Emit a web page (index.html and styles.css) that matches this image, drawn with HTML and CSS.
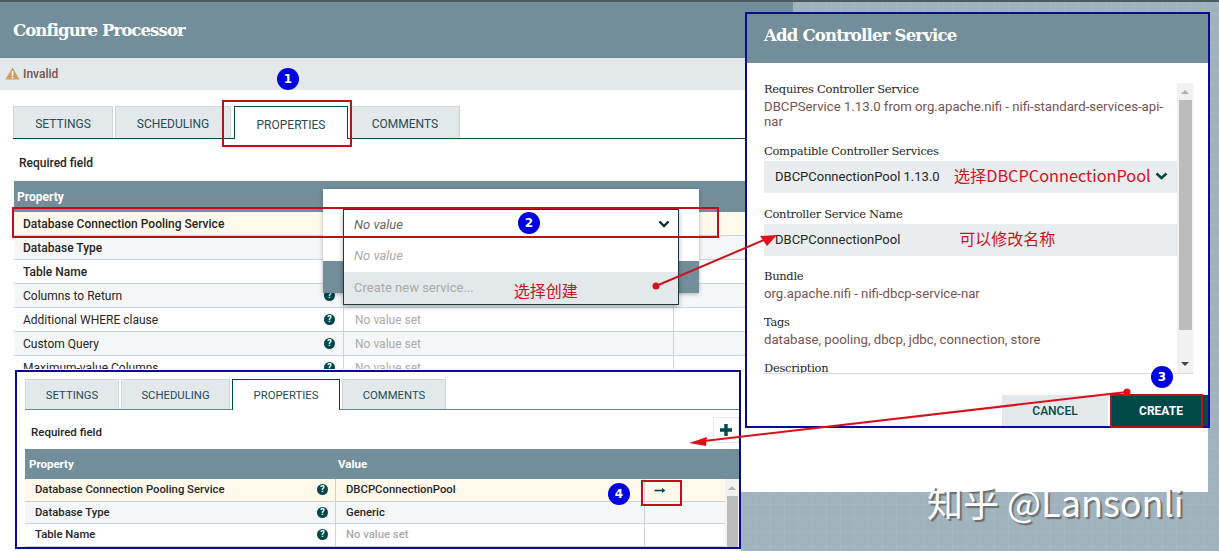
FILE: index.html
```html
<!DOCTYPE html>
<html lang="zh">
<head>
    <meta charset="UTF-8">
    <title>Configure Processor</title>
    <link rel="stylesheet" href="styles.css">
</head>
<body>
<div class="desktop">
    <div class="top-strip"></div>

    <!-- Configure Processor -->
    <section class="config-window">
        <header class="title-bar">Configure Processor</header>
        <div class="status-bar">
            <svg class="warn-icon" width="15" height="13" viewBox="0 0 15 13"><path d="M7.5 0.5 L14.6 12.6 H0.4 Z" fill="#cf9f5d"/><rect x="6.7" y="4" width="1.6" height="5" fill="#fff"/><rect x="6.7" y="9.8" width="1.6" height="1.6" fill="#fff"/></svg>
            <span>Invalid</span>
        </div>
        <nav class="tabs tabs-main">
            <div class="tab">SETTINGS</div>
            <div class="tab">SCHEDULING</div>
            <div class="tab active">PROPERTIES</div>
            <div class="tab">COMMENTS</div>
        </nav>
        <div class="required">Required field</div>
        <div class="prop-table">
            <div class="prop-head">Property</div>
            <div class="prop-row yellow strong"><span class="name">Database Connection Pooling Service</span><i class="help">?</i><span class="val"></span><span></span></div>
            <div class="prop-row grey strong"><span class="name">Database Type</span><i class="help">?</i><span class="val"></span><span></span></div>
            <div class="prop-row strong"><span class="name">Table Name</span><i class="help">?</i><span class="val"></span><span></span></div>
            <div class="prop-row grey"><span class="name">Columns to Return</span><i class="help">?</i><span class="val"></span><span></span></div>
            <div class="prop-row"><span class="name">Additional WHERE clause</span><i class="help">?</i><span class="val unset">No value set</span><span></span></div>
            <div class="prop-row grey"><span class="name">Custom Query</span><i class="help">?</i><span class="val unset">No value set</span><span></span></div>
            <div class="prop-row"><span class="name">Maximum-value Columns</span><i class="help">?</i><span class="val unset">No value set</span><span></span></div>
        </div>
    </section>
    <div class="config-foot"></div>
    <div class="add-foot"></div>

    <!-- Value dropdown -->
    <div class="value-popup">
        <div class="popup-foot"></div>
        <div class="combo">
            <div class="combo-row head">
                <span>No value</span>
                <svg class="chevron" width="12" height="8" viewBox="0 0 12 8"><path d="M1.5 1.5 L6 6 L10.5 1.5" fill="none" stroke="#1c2b2e" stroke-width="2.4"/></svg>
            </div>
            <div class="combo-row option">No value</div>
            <div class="combo-row create"><span>Create new service...</span><span class="note note-create">选择创建</span></div>
        </div>
    </div>

    <!-- Result after creating -->
    <section class="result-pane">
        <nav class="tabs tabs-small">
            <div class="tab">SETTINGS</div>
            <div class="tab">SCHEDULING</div>
            <div class="tab active">PROPERTIES</div>
            <div class="tab">COMMENTS</div>
        </nav>
        <div class="result-tools">
            <span class="required-small">Required field</span>
            <span class="add-btn">
                <svg width="14" height="14" viewBox="0 0 14 14"><path d="M7 1 V13 M1 7 H13" stroke="#004849" stroke-width="3.4"/></svg>
            </span>
        </div>
        <div class="result-table">
            <div class="result-head"><span>Property</span><span>Value</span></div>
            <div class="result-rows">
                <div class="result-row yellow"><span class="name">Database Connection Pooling Service</span><i class="help">?</i><span class="val">DBCPConnectionPool</span><span class="go">
                    <svg width="12" height="7" viewBox="0 0 12 7"><path d="M0.5 3.5 H9" stroke="#004849" stroke-width="1.6"/><path d="M8 1 L11.5 3.5 L8 6 Z" fill="#004849"/></svg>
                </span></div>
                <div class="result-row grey"><span class="name">Database Type</span><i class="help">?</i><span class="val">Generic</span><span class="go"></span></div>
                <div class="result-row"><span class="name">Table Name</span><i class="help">?</i><span class="val unset">No value set</span><span class="go"></span></div>
                <div class="scrollbar result-scroll"><b class="up"></b><div class="thumb"></div></div>
            </div>
        </div>
    </section>

    <!-- Add Controller Service -->
    <section class="add-window">
        <header class="add-title">Add Controller Service</header>
        <div class="add-body">
            <div class="add-form">
                <div class="label">Requires Controller Service</div>
                <div class="info info-low">DBCPService 1.13.0 from org.apache.nifi - nifi-standard-services-api-nar</div>
                <div class="label gap-a">Compatible Controller Services</div>
                <div class="field">
                    <span>DBCPConnectionPool 1.13.0</span>
                    <span class="note note-big">选择DBCPConnectionPool</span>
                    <svg class="chevron field-chevron" width="13" height="8" viewBox="0 0 13 8"><path d="M1.5 1.5 L6.5 6 L11.5 1.5" fill="none" stroke="#004849" stroke-width="2.5"/></svg>
                </div>
                <div class="label gap-b">Controller Service Name</div>
                <div class="field">
                    <span>DBCPConnectionPool</span>
                    <span class="note note-name">可以修改名称</span>
                </div>
                <div class="label gap-c">Bundle</div>
                <div class="info info-low">org.apache.nifi - nifi-dbcp-service-nar</div>
                <div class="label gap-d">Tags</div>
                <div class="info info-low">database, pooling, dbcp, jdbc, connection, store</div>
                <div class="label gap-d">Description</div>
            </div>
            <div class="scrollbar add-scroll"><b class="up"></b><div class="thumb"></div><b class="down"></b></div>
        </div>
        <div class="add-actions">
            <div class="btn cancel">CANCEL</div>
            <div class="btn create">CREATE</div>
        </div>
    </section>

    <div class="watermark">知乎 @Lansonli</div>

    <!-- Annotations -->
    <div class="mark mark-tab"></div>
    <div class="mark mark-row"></div>
    <div class="mark mark-create"></div>
    <div class="mark mark-go"></div>

    <svg class="arrows" width="1219" height="551" viewBox="0 0 1219 551">
        <circle cx="656" cy="286" r="3.5" fill="#e00f1c"/>
        <path d="M656 286 L764 240" stroke="#c8141f" stroke-width="2"/>
        <path d="M777 235 L760 236 L767 246 Z" fill="#e00f1c"/>
        <circle cx="1127" cy="392" r="3.5" fill="#e00f1c"/>
        <path d="M1127 392 L704 441" stroke="#d8101c" stroke-width="2"/>
        <path d="M689 443 L707 437 L706 446 Z" fill="#e00f1c"/>
    </svg>

    <span class="badge badge-1">1</span>
    <span class="badge badge-2">2</span>
    <span class="badge badge-3">3</span>
    <span class="badge badge-4">4</span>
</div>
</body>
</html>
```

FILE: styles.css
```css
* {
    margin: 0;
    padding: 0;
    box-sizing: border-box;
}

body {
    font-family: 'Roboto', sans-serif;
    font-size: 12px;
    color: #262626;
    background: #a2b3c0;
    overflow: hidden;
}

.desktop {
    position: relative;
    width: 1219px;
    height: 551px;
    overflow: hidden;
    background-color: #a0b2be;
    background-image:
        linear-gradient(rgba(255, 255, 255, 0.06) 1px, transparent 1px),
        linear-gradient(90deg, rgba(255, 255, 255, 0.06) 1px, transparent 1px);
    background-size: 14px 14px;
}

.top-strip {
    height: 2px;
    background: #4c5b60;
}

/* Окно Configure Processor */
.config-window {
    position: absolute;
    left: 0;
    top: 2px;
    width: 793px;
    height: 490px;
    background: #fff;
}

.config-foot {
    position: absolute;
    left: 0;
    top: 492px;
    width: 741px;
    height: 59px;
    background: #fff;
}

.add-foot {
    position: absolute;
    left: 793px;
    top: 428px;
    width: 415px;
    height: 64px;
    background: #fff;
}

.title-bar {
    height: 56px;
    padding: 19px 0 0 13px;
    background: #728e9b;
    color: #fff;
    font-family: 'DejaVu Serif', serif;
    font-weight: bold;
    font-size: 16.5px;
    letter-spacing: -0.9px;
}

.status-bar {
    display: flex;
    align-items: center;
    gap: 3px;
    width: 745px;
    height: 32px;
    padding: 0 0 1px 5px;
    background: #e3e8eb;
    color: #775351;
    font-size: 12px;
    font-weight: 500;
}

/* Вкладки */
.tabs {
    display: grid;
    border-bottom: 1px solid #004849;
}

.tab {
    display: flex;
    align-items: center;
    justify-content: center;
    padding-top: 3px;
    background: #e3e8eb;
    border: 1px solid #cfd6da;
    border-bottom: none;
    color: #264c58;
}

.tab.active {
    background: #fff;
    border: 1px solid #004849;
    border-bottom: none;
    margin-bottom: -1px;
    z-index: 1;
}

.tabs-main {
    grid-template-columns: 100px 116px 115px 110px;
    column-gap: 2px;
    width: 732px;
    height: 33px;
    margin: 16px 0 0 13px;
}

.tabs-main .tab.active {
    margin-left: 1px;
}

.required {
    margin: 17px 0 0 19px;
    height: 15px;
    font-weight: 500;
}

/* Таблица свойств */
.prop-table {
    width: 731px;
    height: 188px;
    margin: 10px 0 0 14px;
    overflow: hidden;
}

.prop-head {
    height: 31px;
    padding: 9px 0 0 3px;
    background: #728e9b;
    color: #fff;
    font-weight: bold;
}

.prop-row {
    display: grid;
    grid-template-columns: 329px 331px 1fr;
    position: relative;
    height: 24px;
    line-height: 25px;
    border-bottom: 1px solid #ccd3d7;
    background: #fff;
}

.prop-row.yellow,
.result-row.yellow {
    background: #fff9eb;
}

.prop-row.grey,
.result-row.grey {
    background: #f4f6f7;
}

.prop-row.strong .name {
    font-weight: 500;
}

.prop-row .name {
    padding-left: 9px;
}

.prop-row .val {
    padding-left: 11px;
    border-left: 1px solid #ccd3d7;
    border-right: 1px solid #ccd3d7;
}

.unset {
    color: #aaa;
}

.help {
    position: absolute;
    width: 11px;
    height: 11px;
    border-radius: 50%;
    background: #004849;
    color: #fff;
    font-style: normal;
    font-weight: bold;
    font-size: 9px;
    line-height: 11px;
    text-align: center;
}

.prop-row .help {
    left: 310px;
    top: 6px;
}

/* Выпадающий список */
.value-popup {
    position: absolute;
    left: 323px;
    top: 189px;
    width: 376px;
    height: 104px;
    padding: 20px 20px 0;
    background: #fff;
    box-shadow: 0 1px 4px rgba(0, 0, 0, 0.3);
}

.popup-foot {
    position: absolute;
    left: 0;
    right: 0;
    bottom: 0;
    height: 32px;
    background: #728e9b;
}

.combo {
    position: relative;
    width: 336px;
    height: 96px;
    background: #fff;
    border: 1px solid #1f3a3e;
    box-shadow: 0 2px 5px rgba(0, 0, 0, 0.3);
}

.combo-row {
    display: flex;
    align-items: center;
    height: 31px;
    padding: 0 0 2px 10px;
    font-size: 13px;
}

.combo-row.head {
    height: 30px;
    font-style: italic;
    color: #666;
}

.combo-row.option {
    height: 32px;
    font-style: italic;
    color: #aaa;
}

.combo-row.create {
    height: 32px;
    background: #e3e8eb;
    color: #aaa;
}

.combo .chevron {
    margin-left: auto;
    margin-right: 8px;
}

.note {
    font-family: 'Noto Sans CJK SC', sans-serif;
    color: #c8141f;
}

.note-create {
    margin: 5px 0 0 40px;
    font-size: 16px;
}

.note-big {
    margin: 0 0 3px 14px;
    font-size: 16.3px;
    color: #d8101c;
}

.note-name {
    margin: 0 0 3px 59px;
    font-size: 16px;
}

/* Нижняя панель */
.result-pane {
    position: absolute;
    left: 15px;
    top: 370px;
    width: 726px;
    height: 179px;
    padding: 7px 0 0 8px;
    background: #fff;
    border: 2px solid #0b0b8f;
}

.tabs-small {
    grid-template-columns: 94px 109px 108px 104px;
    column-gap: 2px;
    height: 31px;
    font-size: 11.3px;
    border-bottom-color: #5f8a8f;
}

.tabs-small .tab {
    padding-top: 1px;
    border-bottom: none;
}

.result-tools {
    display: flex;
    align-items: center;
    justify-content: space-between;
    height: 39px;
    padding-left: 6px;
}

.required-small {
    margin-top: 5px;
    font-weight: 500;
    font-size: 11.5px;
}

.add-btn {
    display: flex;
    align-items: center;
    justify-content: center;
    width: 26px;
    height: 26px;
    border: 1px solid #e6e9eb;
}

.result-table {
    width: 714px;
}

.result-head {
    display: grid;
    grid-template-columns: 309px 1fr;
    height: 30px;
    padding: 8px 0 0 4px;
    background: #728e9b;
    color: #fff;
    font-size: 11.5px;
    font-weight: bold;
}

.result-rows {
    position: relative;
    height: 68px;
    overflow: hidden;
}

.result-row {
    display: grid;
    grid-template-columns: 310px 310px 1fr;
    position: relative;
    height: 22.5px;
    line-height: 22px;
    font-size: 11.3px;
    font-weight: 500;
    border-bottom: 1px solid #ccd3d7;
    background: #fff;
}

.result-row .name {
    padding-left: 10px;
}

.result-row .val {
    padding-left: 10px;
    border-left: 1px solid #ccd3d7;
    border-right: 1px solid #ccd3d7;
}

.result-row .help {
    left: 292px;
    top: 5px;
}

.go {
    display: flex;
    align-items: center;
    padding-left: 9px;
}

/* Полоса прокрутки */
.scrollbar {
    position: absolute;
    right: 0;
    background: #f1f1f1;
}

.scrollbar .thumb {
    background: #bcbcbc;
    margin: 0 1px 0 2px;
}

.up,
.down {
    display: block;
    margin: 0 auto;
    width: 0;
    height: 0;
    border-left: 4px solid transparent;
    border-right: 4px solid transparent;
}

.up {
    border-bottom: 4px solid #b0b0b0;
}

.down {
    border-top: 4px solid #444;
}

.result-scroll {
    top: 0;
    bottom: 0;
    width: 14px;
    padding-top: 7px;
}

.result-scroll .thumb {
    height: 70px;
    margin-top: 6px;
}

/* Окно Add Controller Service */
.add-window {
    position: absolute;
    left: 745px;
    top: 12px;
    width: 465px;
    height: 416px;
    background: #fff;
    border: 2px solid #0b0b8f;
    overflow: hidden;
}

.add-title {
    height: 49px;
    padding: 12px 0 0 17px;
    background: #728e9b;
    color: #fff;
    font-family: 'DejaVu Serif', serif;
    font-weight: bold;
    font-size: 16.5px;
    letter-spacing: -0.8px;
}

.add-body {
    position: relative;
    width: 429px;
    height: 291px;
    margin: 20px 0 0 17px;
    border-bottom: 1px solid #d5d9dc;
}

.add-form {
    width: 413px;
    height: 290px;
    overflow: hidden;
}

.label {
    font-family: 'DejaVu Serif', serif;
    font-size: 11.5px;
    line-height: 13px;
    color: #262626;
    letter-spacing: -0.3px;
}

.info {
    width: 404px;
    margin-top: 2px;
    font-size: 13.2px;
    line-height: 15px;
    color: #775351;
}

.info.info-low {
    margin-top: 3px;
}

.gap-a {
    margin-top: 16px;
}

.gap-b {
    margin: 15px 0 3px;
}

.gap-c {
    margin-top: 14px;
}

.gap-d {
    margin-top: 15px;
}

.field {
    display: flex;
    align-items: center;
    height: 32px;
    margin-top: 3px;
    padding: 0 9px 2px 11px;
    background: #e9edef;
    font-size: 13px;
}

.field-chevron {
    margin-left: auto;
}

.add-scroll {
    top: 0;
    bottom: 0;
    width: 16px;
    padding-top: 7px;
}

.add-scroll .thumb {
    height: 230px;
    margin-top: 6px;
}

.add-scroll .down {
    margin-top: 32px;
}

.add-actions {
    display: flex;
    justify-content: flex-end;
    margin-top: 21px;
}

.btn {
    display: flex;
    align-items: center;
    justify-content: center;
    height: 31px;
    font-weight: 500;
}

.btn.cancel {
    width: 106px;
    margin-right: 2px;
    background: #e3e8eb;
    color: #004849;
}

.btn.create {
    width: 98px;
    padding-left: 4px;
    background: #004849;
    color: #fff;
    font-weight: bold;
}

/* Пометки поверх скриншота */
.mark {
    position: absolute;
    border: 2px solid #c00f1c;
}

.mark-tab {
    left: 222px;
    top: 100px;
    width: 130px;
    height: 47px;
}

.mark-row {
    left: 12px;
    top: 207px;
    width: 707px;
    height: 31px;
}

.mark-create {
    left: 1110px;
    top: 394px;
    width: 93px;
    height: 34px;
}

.mark-go {
    left: 641px;
    top: 480px;
    width: 41px;
    height: 26px;
}

.arrows {
    position: absolute;
    left: 0;
    top: 0;
}

.badge {
    position: absolute;
    width: 22px;
    height: 22px;
    border-radius: 50%;
    background: #0000e0;
    color: #fff;
    font-family: 'DejaVu Sans', sans-serif;
    font-size: 12px;
    font-weight: bold;
    line-height: 22px;
    text-align: center;
}

.badge-1 {
    left: 277px;
    top: 68px;
}

.badge-2 {
    left: 518px;
    top: 212px;
}

.badge-3 {
    left: 1151px;
    top: 366px;
}

.badge-4 {
    left: 608px;
    top: 483px;
}

.watermark {
    position: absolute;
    left: 927px;
    top: 478px;
    font-family: 'Noto Sans CJK SC', sans-serif;
    font-size: 36px;
    line-height: 46px;
    color: #fff;
    text-shadow: 2px 2px 1px #6b6b6b;
}
```
